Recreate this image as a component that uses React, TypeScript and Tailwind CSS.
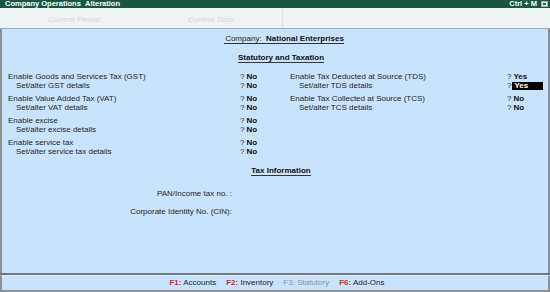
import React from 'react';

type Row = { label: string; value: string; sub?: boolean; active?: boolean };

const leftRows: Row[][] = [
  [
    { label: 'Enable Goods and Services Tax (GST)', value: 'No' },
    { label: 'Set/alter GST details', value: 'No', sub: true },
  ],
  [
    { label: 'Enable Value Added Tax (VAT)', value: 'No' },
    { label: 'Set/alter VAT details', value: 'No', sub: true },
  ],
  [
    { label: 'Enable excise', value: 'No' },
    { label: 'Set/alter excise details', value: 'No', sub: true },
  ],
  [
    { label: 'Enable service tax', value: 'No' },
    { label: 'Set/alter service tax details', value: 'No', sub: true },
  ],
];

const rightRows: Row[][] = [
  [
    { label: 'Enable Tax Deducted at Source (TDS)', value: 'Yes' },
    { label: 'Set/alter TDS details', value: 'Yes', sub: true, active: true },
  ],
  [
    { label: 'Enable Tax Collected at Source (TCS)', value: 'No' },
    { label: 'Set/alter TCS details', value: 'No', sub: true },
  ],
];

// one "label ? value" line; the label box width puts the "?" on its column
const FieldRow = ({ row, labelW, indent }: { row: Row; labelW: string; indent: string }) => (
  <div className="flex h-[9px] items-center leading-[9px]">
    <span className={`${labelW} ${row.sub ? indent : ''} shrink-0 whitespace-nowrap`}>{row.label}</span>
    <span>?</span>
    {row.active ? (
      <span className="ml-[1px] inline-block h-[8px] w-[31px] bg-black pl-[2px] font-bold leading-[8px] text-white">
        {row.value}
      </span>
    ) : (
      <span className="ml-[2px] font-bold text-[#111]">{row.value}</span>
    )}
  </div>
);

const FKey = ({ k, label, dim }: { k: string; label: string; dim?: boolean }) => (
  <span className="whitespace-nowrap">
    <span className={dim ? 'text-[#8e9396]' : 'font-bold text-[#e3202b]'}>{k}:</span>{' '}
    <span className={dim ? 'text-[#8e9396]' : 'text-[#1e1e1e]'}>{label}</span>
  </span>
);

export default function App() {
  return (
    <div
      className="flex h-[292px] w-[550px] flex-col overflow-hidden bg-[#c8e4fc] text-[8px] text-[#1e1e1e]"
      style={{ fontFamily: '"Liberation Sans", Arial, sans-serif' }}
    >
      {/* title bar */}
      <div className="flex h-[8px] shrink-0 items-center bg-[#185641] pl-[5px] pr-[2px] text-[7.5px] font-bold leading-[8px] text-white">
        <span className="whitespace-nowrap">Company Operations&nbsp;&nbsp;Alteration</span>
        <span className="ml-auto whitespace-nowrap">Ctrl + M</span>
        <svg width="7" height="6" viewBox="0 0 7 6" className="ml-[4px]">
          <rect x="0.5" y="0.5" width="6" height="5" fill="#dfe8e5" stroke="#9fb3ac" />
          <rect x="2" y="2" width="3" height="2" fill="#41614f" />
        </svg>
      </div>

      {/* period / date band */}
      <div className="flex h-[21px] shrink-0 border-b border-[#a3abaf] bg-[#eef4f4] italic text-[#d2d9d9]">
        <div className="flex w-[283px] items-end border-r border-[#dbe3e3] pb-[2px] pl-[48px]">
          <span>Current Period</span>
          <span className="ml-[88px]">Current Date</span>
        </div>
        <div className="flex-1" />
      </div>

      {/* body */}
      <div className="flex flex-1 flex-col border-x-2 border-[#8c9297]">
        <div className="mt-[5px] flex justify-center">
          <span className="ml-[18px] border-b border-[#333] pl-[1px] leading-[9px]">
            Company:&nbsp; <span className="font-bold text-[#111]">National Enterprises</span>
          </span>
        </div>

        <div className="mt-[9px] flex justify-center">
          <span className="ml-[12px] border-b border-[#333] font-bold leading-[9px] text-[#111]">
            Statutory and Taxation
          </span>
        </div>

        <div className="mt-[9px] flex">
          <div className="flex w-[288px] flex-col gap-[4px] pl-[6px]">
            {leftRows.map((g, i) => (
              <div key={i} className="flex flex-col">
                {g.map((r) => (
                  <FieldRow key={r.label} row={r} labelW={r.sub ? 'w-[224px]' : 'w-[232px]'} indent="ml-[8px]" />
                ))}
              </div>
            ))}
          </div>
          <div className="flex flex-1 flex-col gap-[4px]">
            {rightRows.map((g, i) => (
              <div key={i} className="flex flex-col">
                {g.map((r) => (
                  <FieldRow key={r.label} row={r} labelW={r.sub ? 'w-[208px]' : 'w-[217px]'} indent="ml-[9px]" />
                ))}
              </div>
            ))}
          </div>
        </div>

        <div className="mt-[10px] flex justify-center">
          <span className="ml-[12px] border-b border-[#333] font-bold leading-[9px] text-[#111]">Tax Information</span>
        </div>

        <div className="mt-[13px] flex flex-col gap-[9px]">
          <div className="w-[230px] text-right leading-[9px]">PAN/Income tax no. :</div>
          <div className="w-[230px] text-right leading-[9px]">Corporate Identity No. (CIN):</div>
        </div>
      </div>

      {/* footer */}
      <div className="h-[2px] shrink-0 bg-[#6c7985]" />
      <div className="flex h-[17px] shrink-0 items-center justify-center gap-[10px] border-x-2 border-b-2 border-[#8c9297] border-t border-t-[#e2eefa] pb-[1px] pl-[4px]">
        <FKey k="F1" label="Accounts" />
        <FKey k="F2" label="Inventory" />
        <FKey k="F3" label="Statutory" dim />
        <FKey k="F6" label="Add-Ons" />
      </div>
    </div>
  );
}
